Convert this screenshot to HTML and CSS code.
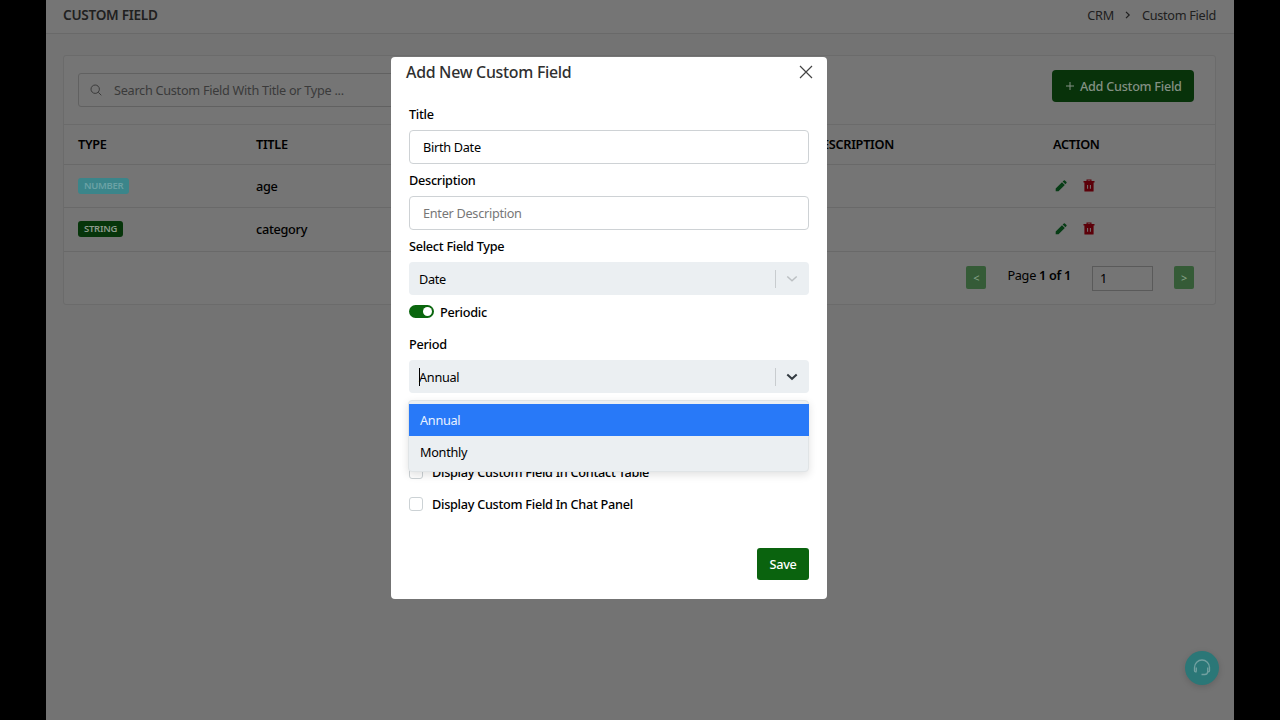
FILE: index.html
```html
<!DOCTYPE html>
<html lang="en">

<head>
  <meta charset="UTF-8" />
  <title>Custom Field</title>
  <link rel="stylesheet" href="styles.css">
</head>

<body>
  <div class="page">
    <header class="topbar">
      <h1>CUSTOM FIELD</h1>
      <div class="crumbs">
        <span>CRM</span>
        <svg width="6" height="8" viewBox="0 0 6 8"><path d="M1 .8 4.2 4 1 7.2" fill="none" stroke="currentColor" stroke-width="1.2" /></svg>
        <span>Custom Field</span>
      </div>
    </header>

    <main class="card">
      <div class="toolbar">
        <div class="search">
          <svg width="12" height="12" viewBox="0 0 12 12"><g fill="none" stroke="currentColor"><circle cx="5.2" cy="5.2" r="4.2" /><path d="m8.3 8.3 3 3" /></g></svg>
          <span>Search Custom Field With Title or Type ...</span>
        </div>
        <button class="add">
          <svg width="8" height="8" viewBox="0 0 8 8"><path d="M4 0v8M0 4h8" stroke="currentColor" /></svg>
          <span>Add Custom Field</span>
        </button>
      </div>

      <div class="row head">
        <span>TYPE</span><span>TITLE</span><span>DESCRIPTION</span><span>ACTION</span>
      </div>
      <div class="row">
        <span class="badge number">NUMBER</span>
        <span>age</span>
        <span></span>
        <span class="actions">
          <svg class="pen" width="12" height="12" viewBox="0 0 12 12"><path d="M.7 8.5 7 2.2 9.8 5 3.5 11.3H.7zM7.6 1.6 8.9.5q.6-.4 1 0L11.500 2q.4.6 0 1.100l-1.100 1.200z" fill="currentColor" /></svg>
          <svg class="bin" width="12" height="13" viewBox="0 0 12 13"><path d="M3.500 2V.5h5V2h3v1.600h-.9V12q0 .6-.6.6H2q-.6 0-.6-.6V3.600H.5V2zM4.700 2h2.600v-.5H4.700zM4.100 6v3.700h1V6zm2.800 0v3.700h1V6z" fill="currentColor" fill-rule="evenodd" /></svg>
        </span>
      </div>
      <div class="row last">
        <span class="badge string">STRING</span>
        <span>category</span>
        <span></span>
        <span class="actions">
          <svg class="pen" width="12" height="12" viewBox="0 0 12 12"><path d="M.7 8.5 7 2.2 9.8 5 3.5 11.3H.7zM7.6 1.6 8.9.5q.6-.4 1 0L11.500 2q.4.6 0 1.100l-1.100 1.200z" fill="currentColor" /></svg>
          <svg class="bin" width="12" height="13" viewBox="0 0 12 13"><path d="M3.500 2V.5h5V2h3v1.600h-.9V12q0 .6-.6.6H2q-.6 0-.6-.6V3.600H.5V2zM4.700 2h2.600v-.5H4.700zM4.100 6v3.700h1V6zm2.800 0v3.700h1V6z" fill="currentColor" fill-rule="evenodd" /></svg>
        </span>
      </div>

      <div class="pager">
        <button class="step">&lt;</button>
        <span class="count">Page <b>1 of 1</b></span>
        <span class="goto">1</span>
        <button class="step">&gt;</button>
      </div>
    </main>

    <div class="support">
      <svg width="18" height="18" viewBox="0 0 18 18"><path d="M3.600 12.800H2.500q-1 0-1-1V8.500a7.500 7.500 0 0 1 15 0v3.300q0 1-1 1h-1.100M3.300 8.500v4M14.700 8.500v4q0 3-3 3H8.500" fill="none" stroke="currentColor" stroke-width="1.300" /></svg>
    </div>
  </div>

  <div class="dialog">
    <div class="dialog-head">
      <h2>Add New Custom Field</h2>
      <svg width="14" height="14" viewBox="0 0 14 14"><path d="m1 1 12 12M13 1 1 13" stroke="#444" stroke-width="1.200" /></svg>
    </div>
    <div class="form">
      <div class="label">Title</div>
      <div class="input">Birth Date</div>
      <div class="label">Description</div>
      <div class="input empty">Enter Description</div>
      <div class="label">Select Field Type</div>
      <div class="select disabled">
        <span class="value">Date</span>
        <span class="arrow"><svg width="12" height="8" viewBox="0 0 12 8"><path d="m1.300 1.500 4.700 4.300 4.700-4.300" fill="none" stroke="currentColor" stroke-width="1.500" /></svg></span>
      </div>
      <div class="periodic"><i class="switch"></i><span>Periodic</span></div>
      <div class="label">Period</div>
      <div class="select">
        <span class="value caret">Annual</span>
        <span class="arrow"><svg width="12" height="8" viewBox="0 0 12 8"><path d="m1.300 1.500 4.700 4.300 4.700-4.300" fill="none" stroke="currentColor" stroke-width="2" /></svg></span>
        <div class="menu">
          <div class="option active">Annual</div>
          <div class="option">Monthly</div>
        </div>
      </div>
      <div class="checks">
        <div class="check"><i class="box"></i><span>Display Custom Field In Contact Table</span></div>
        <div class="check"><i class="box"></i><span>Display Custom Field In Chat Panel</span></div>
      </div>
      <button class="save">Save</button>
    </div>
  </div>

  <svg class="cursor" width="15" height="17" viewBox="0 0 15 17"><path d="M4.800 10 2.500 7.700Q1.500 7 1 7.600q-.5.6.2 1.500l3.500 5.100q.6 1 1.500 1.600h5.300q.7-1 1-2.300l.9-3.200V6.700q0-1-.8-1t-.9 1V5.900q0-1-.9-1t-1 1V5q0-1-.9-1T8 5V4.500L6 2Q5.300.7 4.300 1.100q-.8.4-.4 1.500L6 8.500" fill="#fff" stroke="#222" stroke-width="1.100" stroke-linejoin="round" /><path d="M7.500 9.500v3M9.300 9.500v3M11 9.500v3" stroke="#222" stroke-width=".8" /></svg>
</body>

</html>
```
FILE: styles.css
```css
* {
  box-sizing: border-box;
  margin: 0;
  padding: 0;
}

body {
  height: 720px;
  overflow: hidden;
  background: #000;
  color: #000;
  font: 500 12.7px/18px "Noto Sans", sans-serif;
  letter-spacing: -.28px;
}

svg {
  display: block;
  flex: none;
}

button {
  border: 0;
  font: inherit;
  letter-spacing: inherit;
}

.page {
  width: 1188px;
  height: 720px;
  margin: 0 auto;
  background: #737373;
}

.topbar {
  display: flex;
  justify-content: space-between;
  height: 34px;
  padding: 6px 18px 0 17px;
  border-bottom: 1px solid #696969;
  background: #757575;
  color: #202020;
}

.topbar h1 {
  font-size: 13.6px;
  font-weight: 600;
  line-height: 18px;
}

.crumbs {
  display: flex;
  font-weight: 400;
}

.crumbs svg {
  margin: 5px 11px 0;
}

.card {
  width: 1153px;
  height: 250px;
  margin: 21px 0 0 17px;
  border: 1px solid #6b6b6b;
  border-radius: 3px;
  background: #757575;
}

.toolbar {
  display: flex;
  justify-content: space-between;
  height: 69px;
  padding: 14px 21px 0 14px;
  border-bottom: 1px solid #6b6b6b;
}

.search {
  display: flex;
  align-items: center;
  gap: 12px;
  width: 400px;
  height: 34px;
  margin-top: 3px;
  padding-left: 11px;
  border: 1px solid #616161;
  border-radius: 3px;
  color: #3a3a3a;
  font-weight: 400;
}

.add {
  display: flex;
  align-items: center;
  gap: 6px;
  width: 142px;
  height: 32px;
  padding-left: 14px;
  border-radius: 4px;
  background: #08320a;
  color: #839083;
}

.row {
  display: grid;
  grid-template-columns: 178px 557px 240px 1fr;
  align-items: center;
  height: 43px;
  padding: 0 0 1px 14px;
  border-bottom: 1px solid #696969;
}

.row.head {
  height: 40px;
  font-weight: 600;
}

.row.last {
  height: 44px;
}

.badge {
  justify-self: start;
  height: 16px;
  padding: 0 6px;
  border-radius: 3px;
  color: #8c9a8c;
  font-size: 9.5px;
  font-weight: 600;
  line-height: 16px;
}

.badge.number {
  background: #3b858a;
  color: #6ba2a5;
}

.badge.string {
  background: #06350a;
}

.actions {
  display: flex;
  gap: 16px;
  padding-left: 2px;
}

.pen {
  color: #073d16;
}

.bin {
  margin-top: -1px;
  color: #5c0009;
}

.pager {
  display: flex;
  justify-content: flex-end;
  padding: 13px 21px 0 0;
}

.step {
  width: 20px;
  height: 23px;
  margin-top: 1px;
  border-radius: 2px;
  background: #355b37;
  color: #84a085;
  font-size: 11px;
  line-height: 20px;
}

.count {
  margin: 1px 21px 0;
  font-weight: 400;
}

.count b {
  font-weight: 600;
}

.goto {
  width: 61px;
  height: 25px;
  margin: 1px 21px 0 0;
  padding: 2px 7px;
  border: 1px solid #5a5a5a;
  font-weight: 400;
}

.support {
  position: absolute;
  left: 1185px;
  top: 651px;
  display: flex;
  align-items: center;
  justify-content: center;
  width: 34px;
  height: 34px;
  border-radius: 50%;
  background: #2b7777;
  box-shadow: 0 2px 6px rgba(0, 0, 0, .15);
  color: #72a0a0;
}

/* dialog */
.dialog {
  position: absolute;
  left: 391px;
  top: 57px;
  width: 436px;
  height: 542px;
  border-radius: 4px;
  background: #fff;
}

.dialog-head {
  display: flex;
  align-items: center;
  justify-content: space-between;
  height: 30px;
  padding: 0 14px 0 15px;
  color: #303030;
}

.dialog-head h2 {
  font-size: 15.900px;
  font-weight: 500;
}

.form {
  display: flex;
  flex-direction: column;
  padding: 11px 18px 0;
}

.label {
  height: 32px;
  line-height: 32px;
}

.input {
  height: 34px;
  padding-left: 13px;
  border: 1px solid #ced2d5;
  border-radius: 4px;
  font-weight: 400;
  line-height: 32px;
}

.input.empty {
  color: #777;
}

.select {
  position: relative;
  display: flex;
  align-items: center;
  justify-content: space-between;
  height: 33px;
  padding: 0 1px 0 10px;
  border-radius: 4px;
  background: #ebeff2;
  font-weight: 400;
}

.caret {
  border-left: 1px solid #000;
  text-indent: -1px;
}

.arrow {
  display: flex;
  align-items: center;
  justify-content: center;
  width: 33px;
  height: 18px;
  border-left: 1px solid #c8cccf;
  color: #333b42;
}

.disabled .arrow {
  color: #bcc0c3;
}

.menu {
  position: absolute;
  left: -1px;
  top: 40px;
  z-index: 1;
  width: 401px;
  height: 72px;
  padding-top: 3px;
  border: 1px solid #e0e4e6;
  border-radius: 4px;
  background: #ebeff2;
  box-shadow: 0 3px 8px rgba(0, 0, 0, .12);
  text-indent: 0;
}

.option {
  height: 32px;
  padding-left: 11px;
  line-height: 32px;
}

.option.active {
  margin-right: -1px;
  background: #2879f8;
  color: #e8f2ff;
}

.periodic {
  display: flex;
  align-items: center;
  gap: 6px;
  height: 33px;
}

.switch {
  width: 25px;
  height: 13px;
  padding: 2px;
  border-radius: 7px;
  background: #0a660e;
}

.switch::after {
  content: "";
  display: block;
  width: 9px;
  height: 9px;
  margin-left: auto;
  border-radius: 50%;
  background: #fff;
}

.checks {
  margin-top: 63px;
}

.check {
  display: flex;
  align-items: center;
  gap: 9px;
  height: 32px;
}

.box {
  width: 14px;
  height: 14px;
  border: 1px solid #ccd2d5;
  border-radius: 3px;
}

.save {
  align-self: flex-end;
  width: 52px;
  height: 32px;
  margin-top: 28px;
  border-radius: 3px;
  background: #0a630e;
  color: #fff;
}

.cursor {
  position: absolute;
  left: 533px;
  top: 442px;
}
```
